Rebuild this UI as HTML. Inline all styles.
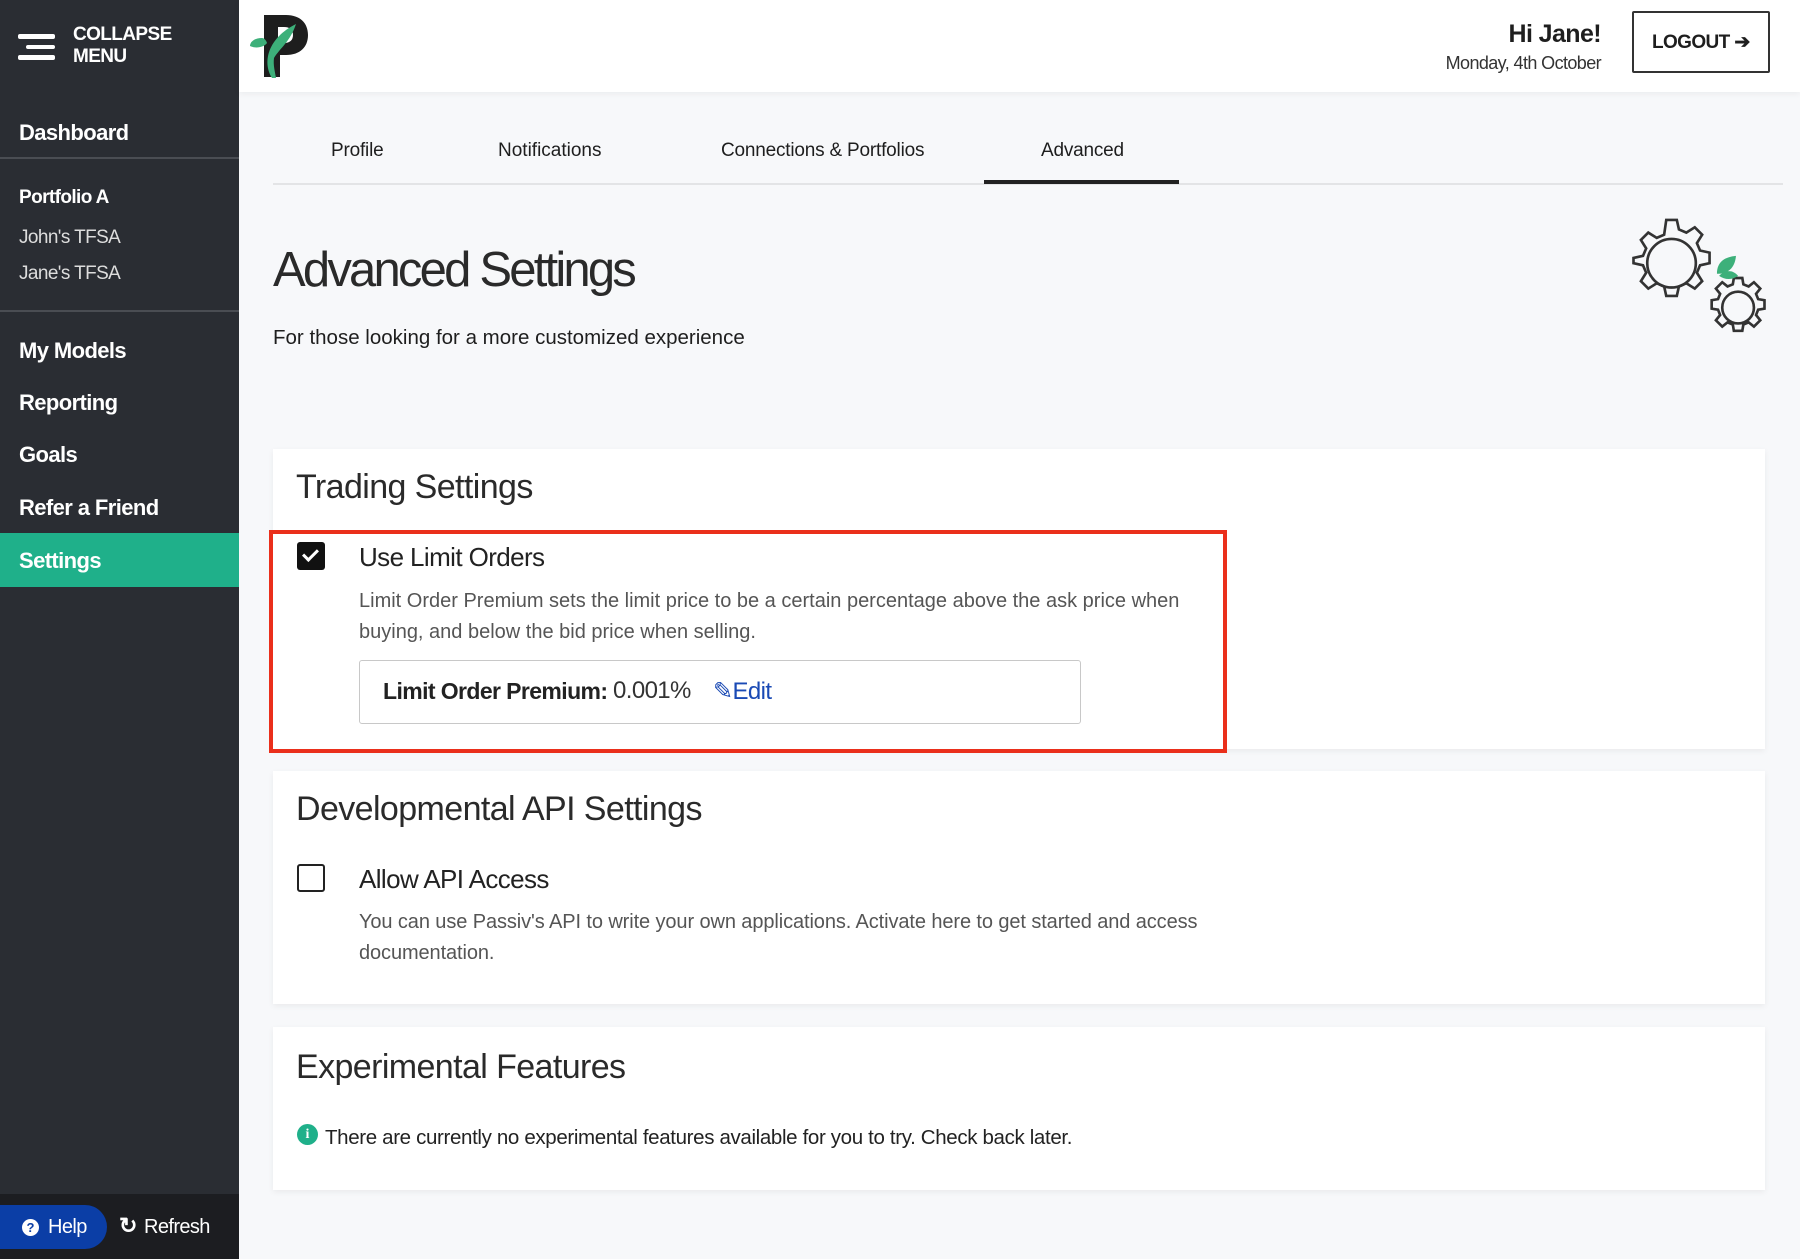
<!DOCTYPE html>
<html><head><meta charset="utf-8"><style>
*{margin:0;padding:0;box-sizing:border-box}
body{width:1800px;height:1259px;position:relative;background:#f7f8fa;font-family:"Liberation Sans",sans-serif;color:#1e1e1e;overflow:hidden}
.a{position:absolute;white-space:nowrap}
.sb{position:absolute;left:0;top:0;width:239px;height:1259px;background:#2a2d33}
.sb .a{color:#fff}
.c{position:absolute;background:#fff;box-shadow:0 2px 6px rgba(0,0,0,.06)}
.t{letter-spacing:-0.6px}
.cb{position:absolute;width:28px;height:28px;border-radius:3px}
</style></head><body>
<div class="sb">
  <div class="a" style="left:18px;top:34px;width:37px;height:5px;background:#fff;border-radius:2px"></div>
  <div class="a" style="left:26px;top:45px;width:29px;height:4px;background:#fff;border-radius:2px"></div>
  <div class="a" style="left:18px;top:55px;width:37px;height:5px;background:#fff;border-radius:2px"></div>
  <div class="a t" style="left:73px;top:24px;font-size:19px;font-weight:bold;line-height:22px">COLLAPSE<br>MENU</div>
  <div class="a t" style="left:19px;top:120px;font-size:22px;font-weight:bold">Dashboard</div>
  <div class="a" style="left:0;top:157px;width:239px;height:2px;background:#4a4d53"></div>
  <div class="a t" style="left:19px;top:187px;font-size:19px;font-weight:bold">Portfolio A</div>
  <div class="a t" style="left:19px;top:227px;font-size:19px;color:#ddd!important">John's TFSA</div>
  <div class="a t" style="left:19px;top:263px;font-size:19px;color:#ddd!important">Jane's TFSA</div>
  <div class="a" style="left:0;top:310px;width:239px;height:2px;background:#4a4d53"></div>
  <div class="a t" style="left:19px;top:338px;font-size:22px;font-weight:bold">My Models</div>
  <div class="a t" style="left:19px;top:390px;font-size:22px;font-weight:bold">Reporting</div>
  <div class="a t" style="left:19px;top:442px;font-size:22px;font-weight:bold">Goals</div>
  <div class="a t" style="left:19px;top:495px;font-size:22px;font-weight:bold">Refer a Friend</div>
  <div class="a" style="left:0;top:533px;width:239px;height:54px;background:#1fb08a"></div>
  <div class="a t" style="left:19px;top:548px;font-size:22px;font-weight:bold">Settings</div>
  <div class="a" style="left:0;top:1194px;width:239px;height:65px;background:#1c1d21"></div>
  <div class="a" style="left:0;top:1205px;width:107px;height:44px;background:#0b3ea6;border-radius:0 22px 22px 0"></div>
  <div class="a" style="left:22px;top:1219px;width:17px;height:17px;border-radius:50%;background:#fff;color:#0b3ea6!important;font-size:13px;font-weight:bold;text-align:center;line-height:17px">?</div>
  <div class="a t" style="left:48px;top:1216px;font-size:20px">Help</div>
  <div class="a" style="left:119px;top:1213px;font-size:22px;font-weight:bold">&#x21bb;</div>
  <div class="a t" style="left:144px;top:1216px;font-size:20px">Refresh</div>
</div>
<div class="a" style="left:239px;top:0;width:1561px;height:92px;background:#fff;box-shadow:0 2px 6px rgba(0,0,0,.05)"></div>
<svg class="a" style="left:248px;top:12px" width="62" height="68" viewBox="0 0 62 68">
  <path d="M16 3h22c14 0 22 8 22 20s-8 20-22 20h-6v22H16z" fill="#1e1e1e"/>
  <path d="M30 15h6c6 0 9 3 9 8s-3 8-9 8h-6z" fill="#fff"/>
  <path d="M24 66C14 50 20 26 48 12 42 30 32 36 26 46c-1 7 1 14 2 20z" fill="#3db07a"/>
  <path d="M14 26c-8 0-12 4-12 8 6 3 14 1 17-3-1-3-3-5-5-5z" fill="#3db07a"/>
</svg>
<div class="a t" style="right:199px;top:20px;font-size:25px;font-weight:bold">Hi Jane!</div>
<div class="a t" style="right:199px;top:53px;font-size:18px;color:#333">Monday, 4th October</div>
<div class="a" style="left:1632px;top:11px;width:138px;height:62px;border:2px solid #333;border-radius:2px"></div>
<div class="a t" style="left:1652px;top:31px;font-size:19px;font-weight:bold">LOGOUT &#x2794;</div>

<div class="a" style="left:331px;top:140px;font-size:19px;letter-spacing:-0.2px">Profile</div>
<div class="a" style="left:498px;top:140px;font-size:19px;letter-spacing:0">Notifications</div>
<div class="a" style="left:721px;top:140px;font-size:19px;letter-spacing:-0.2px">Connections &amp; Portfolios</div>
<div class="a" style="left:1041px;top:140px;font-size:19px;letter-spacing:-0.2px">Advanced</div>
<div class="a" style="left:273px;top:183px;width:1510px;height:2px;background:#e3e4e6"></div>
<div class="a" style="left:984px;top:180px;width:195px;height:4px;background:#222"></div>

<div class="a" style="left:273px;top:242px;font-size:49px;letter-spacing:-2.8px;color:#2a2a2a">Advanced Settings</div>
<div class="a" style="left:273px;top:326px;font-size:20.5px;letter-spacing:0">For those looking for a more customized experience</div>
<svg class="a" style="left:1624px;top:214px" width="150" height="128" viewBox="0 0 142 120" fill="none" stroke="#333" stroke-width="2.5">
  <circle cx="45" cy="46" r="23"/>
  <path d="M40 5h10l2 9 7 3 8-5 7 7-5 8 3 7 9 2v10l-9 2-3 7 5 8-7 7-8-5-7 3-2 9H40l-2-9-7-3-8 5-7-7 5-8-3-7-9-2V41l9-2 3-7-5-8 7-7 8 5 7-3z"/>
  <circle cx="108" cy="88" r="15"/>
  <path d="M104 60h8l1 6 5 2 5-4 6 6-4 5 2 5 6 1v8l-6 1-2 5 4 5-6 6-5-4-5 2-1 6h-8l-1-6-5-2-5 4-6-6 4-5-2-5-6-1v-8l6-1 2-5-4-5 6-6 5 4 5-2z"/>
  <path d="M88 56c0-12 8-16 18-17-1 12-8 17-18 17zM90 58c6-6 13-6 18 0-6 4-12 4-18 0z" fill="#3db07a" stroke="none"/>
</svg>

<div class="c" style="left:273px;top:449px;width:1492px;height:300px"></div>
<div class="a t" style="left:296px;top:468px;font-size:34px;color:#2a2a2a">Trading Settings</div>
<div class="a" style="left:269px;top:530px;width:958px;height:223px;border:4px solid #ea2f1b"></div>
<div class="cb" style="left:297px;top:542px;background:#111"></div>
<div class="a" style="left:304px;top:546px;width:9px;height:15px;border:solid #fff;border-width:0 3px 3px 0;transform:rotate(45deg);margin-left:2px"></div>
<div class="a t" style="left:359px;top:542px;font-size:26px;color:#222">Use Limit Orders</div>
<div class="a" style="left:359px;top:586px;font-size:20px;letter-spacing:0;color:#555;line-height:31px">Limit Order Premium sets the limit price to be a certain percentage above the ask price when<br>buying, and below the bid price when selling.</div>
<div class="a" style="left:359px;top:660px;width:722px;height:64px;border:1.5px solid #c8c8c8;border-radius:3px;background:#fff"></div>
<div class="a t" style="left:383px;top:678px;font-size:23px;font-weight:bold;color:#222">Limit Order Premium:</div>
<div class="a t" style="left:613px;top:677px;font-size:24px;color:#333">0.001%</div>
<div class="a t" style="left:713px;top:677px;font-size:24px;color:#1a4ab5">&#x270E;Edit</div>

<div class="c" style="left:273px;top:771px;width:1492px;height:233px"></div>
<div class="a t" style="left:296px;top:790px;font-size:34px;color:#2a2a2a">Developmental API Settings</div>
<div class="cb" style="left:297px;top:864px;border:2px solid #222;background:#fff"></div>
<div class="a t" style="left:359px;top:864px;font-size:26px;color:#222">Allow API Access</div>
<div class="a" style="left:359px;top:907px;font-size:20px;letter-spacing:-0.1px;color:#555;line-height:31px">You can use Passiv's API to write your own applications. Activate here to get started and access<br>documentation.</div>

<div class="c" style="left:273px;top:1027px;width:1492px;height:163px"></div>
<div class="a t" style="left:296px;top:1048px;font-size:34px;color:#2a2a2a">Experimental Features</div>
<div class="a" style="left:297px;top:1124px;width:21px;height:21px;border-radius:50%;background:#1fb08a;color:#fff;font-size:14px;font-weight:bold;text-align:center;line-height:21px;font-family:'Liberation Serif',serif">i</div>
<div class="a" style="left:325px;top:1126px;font-size:20.5px;letter-spacing:-0.35px;color:#222">There are currently no experimental features available for you to try. Check back later.</div>
</body></html>
